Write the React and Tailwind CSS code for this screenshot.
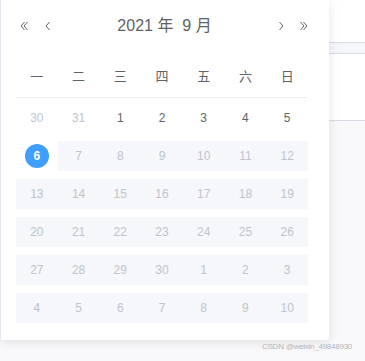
import React from "react";

const weekDays = ["一", "二", "三", "四", "五", "六", "日"];

// each cell: [label, kind]  kind: prev | normal | today | disabled
const rows = [
    [["30", "prev"], ["31", "prev"], ["1", "normal"], ["2", "normal"], ["3", "normal"], ["4", "normal"], ["5", "normal"]],
    [["6", "today"], ["7"], ["8"], ["9"], ["10"], ["11"], ["12"]],
    [["13"], ["14"], ["15"], ["16"], ["17"], ["18"], ["19"]],
    [["20"], ["21"], ["22"], ["23"], ["24"], ["25"], ["26"]],
    [["27"], ["28"], ["29"], ["30"], ["1"], ["2"], ["3"]],
    [["4"], ["5"], ["6"], ["7"], ["8"], ["9"], ["10"]],
];

const Arrow = ({ dir = "left", double = false }) => {
    const flip = dir === "right" ? "scale(-1,1) translate(-10,0)" : undefined;
    return (
        <svg width="10" height="10" viewBox="0 0 10 10" fill="none" stroke="#606266" strokeWidth="1">
            <g transform={flip}>
                {double ? (
                    <>
                        <path d="M4.5 1 L1 5 L4.5 9" />
                        <path d="M7.5 1 L4 5 L7.5 9" />
                    </>
                ) : (
                    <path d="M6.5 1 L3 5 L6.5 9" />
                )}
            </g>
        </svg>
    );
};

const Cell = ({ label, kind }) => {
    if (kind === "today") {
        return (
            <div className="h-[30px] flex items-center justify-center bg-white">
                <span className="w-6 h-6 rounded-full bg-[#409eff] text-white font-bold flex items-center justify-center">
                    {label}
                </span>
            </div>
        );
    }
    const color = kind === "normal" ? "text-[#606266]" : "text-[#c0c4cc]";
    return <div className={`h-[30px] flex items-center justify-center ${color}`}>{label}</div>;
};

const App = () => {
    return (
        <div
            className="relative w-[365px] h-[361px] flex bg-[#f9f9fb] overflow-hidden"
            style={{ fontFamily: '"Liberation Sans", "Noto Sans CJK SC", sans-serif' }}
        >
            {/* the table behind the popup */}
            <div className="absolute inset-0 flex flex-col pl-[320px]">
                <div className="h-[42px] bg-white" />
                <div className="h-[12px] bg-[#f5f6f9] border-y border-[#dcdce6]" />
                <div className="h-[66px] bg-white" />
                <div className="flex-1 bg-[#f9f9fb] border-t border-[#dcdce6]" />
            </div>

            {/* date picker panel */}
            <div className="relative w-[329px] h-[340px] bg-white border-l border-[#e4e7ed] rounded-br-[4px] shadow-[0_2px_12px_0_rgba(0,0,0,0.1)] pl-[15px] pr-[21px]">
                <div className="mt-[12px] h-[28px] flex items-center">
                    <button className="ml-[4px] w-[10px] h-[10px] flex items-center justify-center">
                        <Arrow double />
                    </button>
                    <button className="ml-[13px] w-[10px] h-[10px] flex items-center justify-center">
                        <Arrow />
                    </button>
                    <div className="flex-1 text-center text-[16px] text-[#606266]">2021 年&nbsp;&nbsp;9 月</div>
                    <button className="w-[10px] h-[10px] flex items-center justify-center">
                        <Arrow dir="right" />
                    </button>
                    <button className="ml-[12px] w-[10px] h-[10px] flex items-center justify-center">
                        <Arrow dir="right" double />
                    </button>
                </div>

                <div className="mt-[22px] pb-[5px] border-b border-[#ebeef5] grid grid-cols-7">
                    {weekDays.map((d) => (
                        <div key={d} className="h-[30px] flex items-center justify-center text-[13px] text-[#606266]">
                            {d}
                        </div>
                    ))}
                </div>

                <div className="mt-[5px] flex flex-col gap-[8px] text-[12px]">
                    {rows.map((row, i) => (
                        <div key={i} className={`grid grid-cols-7 ${i > 0 ? "bg-[#f5f7fa]" : ""}`}>
                            {row.map(([label, kind = "disabled"], j) => (
                                <Cell key={j} label={label} kind={kind} />
                            ))}
                        </div>
                    ))}
                </div>
            </div>

            <div className="absolute left-[262px] top-[341px] whitespace-nowrap text-[8px] tracking-[-0.25px] leading-[12px] text-[#b4b4b8]">
                CSDN @weixin_49848930
            </div>
        </div>
    );
};

export default App;
